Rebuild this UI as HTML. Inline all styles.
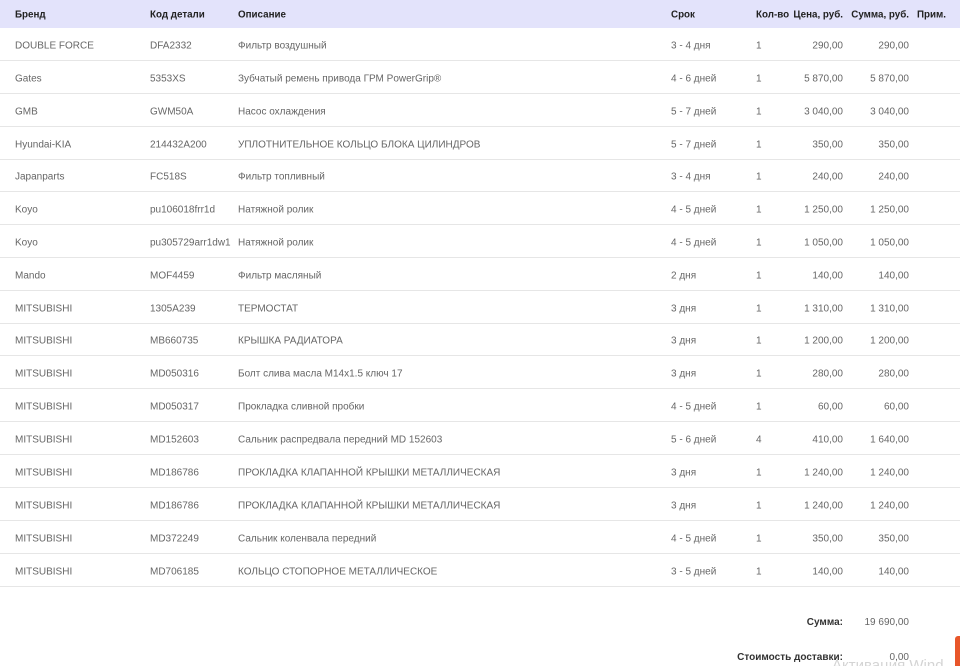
<!DOCTYPE html>
<html><head><meta charset="utf-8"><style>
html,body{margin:0;padding:0;background:#fff;width:960px;height:666px;overflow:hidden;position:relative;font-family:"Liberation Sans","DejaVu Sans",sans-serif;font-size:10px;color:#666}
.hd{position:absolute;left:0;top:0;width:960px;height:28px;background:#e3e3fb;color:#222;font-weight:bold;font-size:9.8px}
.r{position:absolute;left:0;width:960px;height:33px;border-bottom:1px solid #e6e6e6;box-sizing:border-box}
.c{position:absolute;top:50%;transform:translateY(-40%);white-space:nowrap}
.r .c{transform:translateY(-30%)}
.b{left:15px}.k{left:150px}.d{left:238px}.s{left:671px}.q{left:756px}
.p{right:117px;text-align:right}.m{right:51px;text-align:right}.n{left:917px}
.t{position:absolute;white-space:nowrap}
</style></head><body>
<div class="hd"><span class="c b">Бренд</span><span class="c k">Код детали</span><span class="c d">Описание</span><span class="c s">Срок</span><span class="c q">Кол-во</span><span class="c p">Цена, руб.</span><span class="c m">Сумма, руб.</span><span class="c n">Прим.</span></div>

<div class="r" style="top:28px"><span class="c b">DOUBLE FORCE</span><span class="c k">DFA2332</span><span class="c d">Фильтр воздушный</span><span class="c s">3 - 4 дня</span><span class="c q">1</span><span class="c p">290,00</span><span class="c m">290,00</span></div>
<div class="r" style="top:61px"><span class="c b">Gates</span><span class="c k">5353XS</span><span class="c d">Зубчатый ремень привода ГРМ PowerGrip®</span><span class="c s">4 - 6 дней</span><span class="c q">1</span><span class="c p">5 870,00</span><span class="c m">5 870,00</span></div>
<div class="r" style="top:94px"><span class="c b">GMB</span><span class="c k">GWM50A</span><span class="c d">Насос охлаждения</span><span class="c s">5 - 7 дней</span><span class="c q">1</span><span class="c p">3 040,00</span><span class="c m">3 040,00</span></div>
<div class="r" style="top:127px"><span class="c b">Hyundai-KIA</span><span class="c k">214432A200</span><span class="c d">УПЛОТНИТЕЛЬНОЕ КОЛЬЦО БЛОКА ЦИЛИНДРОВ</span><span class="c s">5 - 7 дней</span><span class="c q">1</span><span class="c p">350,00</span><span class="c m">350,00</span></div>
<div class="r" style="top:159px"><span class="c b">Japanparts</span><span class="c k">FC518S</span><span class="c d">Фильтр топливный</span><span class="c s">3 - 4 дня</span><span class="c q">1</span><span class="c p">240,00</span><span class="c m">240,00</span></div>
<div class="r" style="top:192px"><span class="c b">Koyo</span><span class="c k">pu106018frr1d</span><span class="c d">Натяжной ролик</span><span class="c s">4 - 5 дней</span><span class="c q">1</span><span class="c p">1 250,00</span><span class="c m">1 250,00</span></div>
<div class="r" style="top:225px"><span class="c b">Koyo</span><span class="c k">pu305729arr1dw1</span><span class="c d">Натяжной ролик</span><span class="c s">4 - 5 дней</span><span class="c q">1</span><span class="c p">1 050,00</span><span class="c m">1 050,00</span></div>
<div class="r" style="top:258px"><span class="c b">Mando</span><span class="c k">MOF4459</span><span class="c d">Фильтр масляный</span><span class="c s">2 дня</span><span class="c q">1</span><span class="c p">140,00</span><span class="c m">140,00</span></div>
<div class="r" style="top:291px"><span class="c b">MITSUBISHI</span><span class="c k">1305A239</span><span class="c d">ТЕРМОСТАТ</span><span class="c s">3 дня</span><span class="c q">1</span><span class="c p">1 310,00</span><span class="c m">1 310,00</span></div>
<div class="r" style="top:323px"><span class="c b">MITSUBISHI</span><span class="c k">MB660735</span><span class="c d">КРЫШКА РАДИАТОРА</span><span class="c s">3 дня</span><span class="c q">1</span><span class="c p">1 200,00</span><span class="c m">1 200,00</span></div>
<div class="r" style="top:356px"><span class="c b">MITSUBISHI</span><span class="c k">MD050316</span><span class="c d">Болт слива масла M14x1.5 ключ 17</span><span class="c s">3 дня</span><span class="c q">1</span><span class="c p">280,00</span><span class="c m">280,00</span></div>
<div class="r" style="top:389px"><span class="c b">MITSUBISHI</span><span class="c k">MD050317</span><span class="c d">Прокладка сливной пробки</span><span class="c s">4 - 5 дней</span><span class="c q">1</span><span class="c p">60,00</span><span class="c m">60,00</span></div>
<div class="r" style="top:422px"><span class="c b">MITSUBISHI</span><span class="c k">MD152603</span><span class="c d">Сальник распредвала передний MD 152603</span><span class="c s">5 - 6 дней</span><span class="c q">4</span><span class="c p">410,00</span><span class="c m">1 640,00</span></div>
<div class="r" style="top:455px"><span class="c b">MITSUBISHI</span><span class="c k">MD186786</span><span class="c d">ПРОКЛАДКА КЛАПАННОЙ КРЫШКИ МЕТАЛЛИЧЕСКАЯ</span><span class="c s">3 дня</span><span class="c q">1</span><span class="c p">1 240,00</span><span class="c m">1 240,00</span></div>
<div class="r" style="top:488px"><span class="c b">MITSUBISHI</span><span class="c k">MD186786</span><span class="c d">ПРОКЛАДКА КЛАПАННОЙ КРЫШКИ МЕТАЛЛИЧЕСКАЯ</span><span class="c s">3 дня</span><span class="c q">1</span><span class="c p">1 240,00</span><span class="c m">1 240,00</span></div>
<div class="r" style="top:521px"><span class="c b">MITSUBISHI</span><span class="c k">MD372249</span><span class="c d">Сальник коленвала передний</span><span class="c s">4 - 5 дней</span><span class="c q">1</span><span class="c p">350,00</span><span class="c m">350,00</span></div>
<div class="r" style="top:554px"><span class="c b">MITSUBISHI</span><span class="c k">MD706185</span><span class="c d">КОЛЬЦО СТОПОРНОЕ МЕТАЛЛИЧЕСКОЕ</span><span class="c s">3 - 5 дней</span><span class="c q">1</span><span class="c p">140,00</span><span class="c m">140,00</span></div>

<div class="t" style="top:617px;right:117px;font-weight:bold;color:#333">Сумма:</div>
<div class="t" style="top:617px;right:51px">19 690,00</div>
<div class="t" style="top:652px;right:117px;font-weight:bold;color:#333">Стоимость доставки:</div>
<div class="t" style="top:652px;right:51px">0,00</div>
<div class="t" style="top:657px;left:832px;font-size:15px;color:#d4d4d4">Активация Wind</div>
<div style="position:absolute;left:955px;top:636px;width:5px;height:30px;background:#e8562a;border-radius:3px 0 0 0"></div>
</body></html>
